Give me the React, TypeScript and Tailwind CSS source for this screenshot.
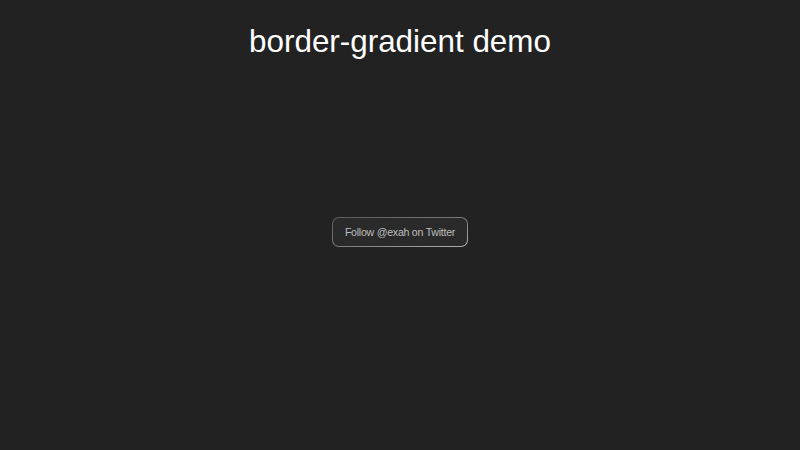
import React from 'react';

export default function App() {
  return (
    <div className="flex h-screen flex-col bg-[#222222] font-['Liberation_Sans',Arial,sans-serif]">
      <h1 className="mt-[23px] text-center text-[31.4px] leading-[37px] text-white">border-gradient demo</h1>
      <div className="flex flex-1 items-center justify-center pb-[46px]">
        {/* gradient border: 1px padding over a gradient, inner fill on top */}
        <a
          href="#"
          className="rounded-[7px] bg-gradient-to-br from-[#5a5a5a] via-[#7a7a7a] to-[#b0b0b0] p-px"
        >
          <span className="block rounded-[6px] bg-[#2a2a2a] px-[12px] py-[7px] text-[10.6px] leading-[14px] tracking-[-0.25px] text-[#bdbdbd]">
            Follow @exah on Twitter
          </span>
        </a>
      </div>
    </div>
  );
}
